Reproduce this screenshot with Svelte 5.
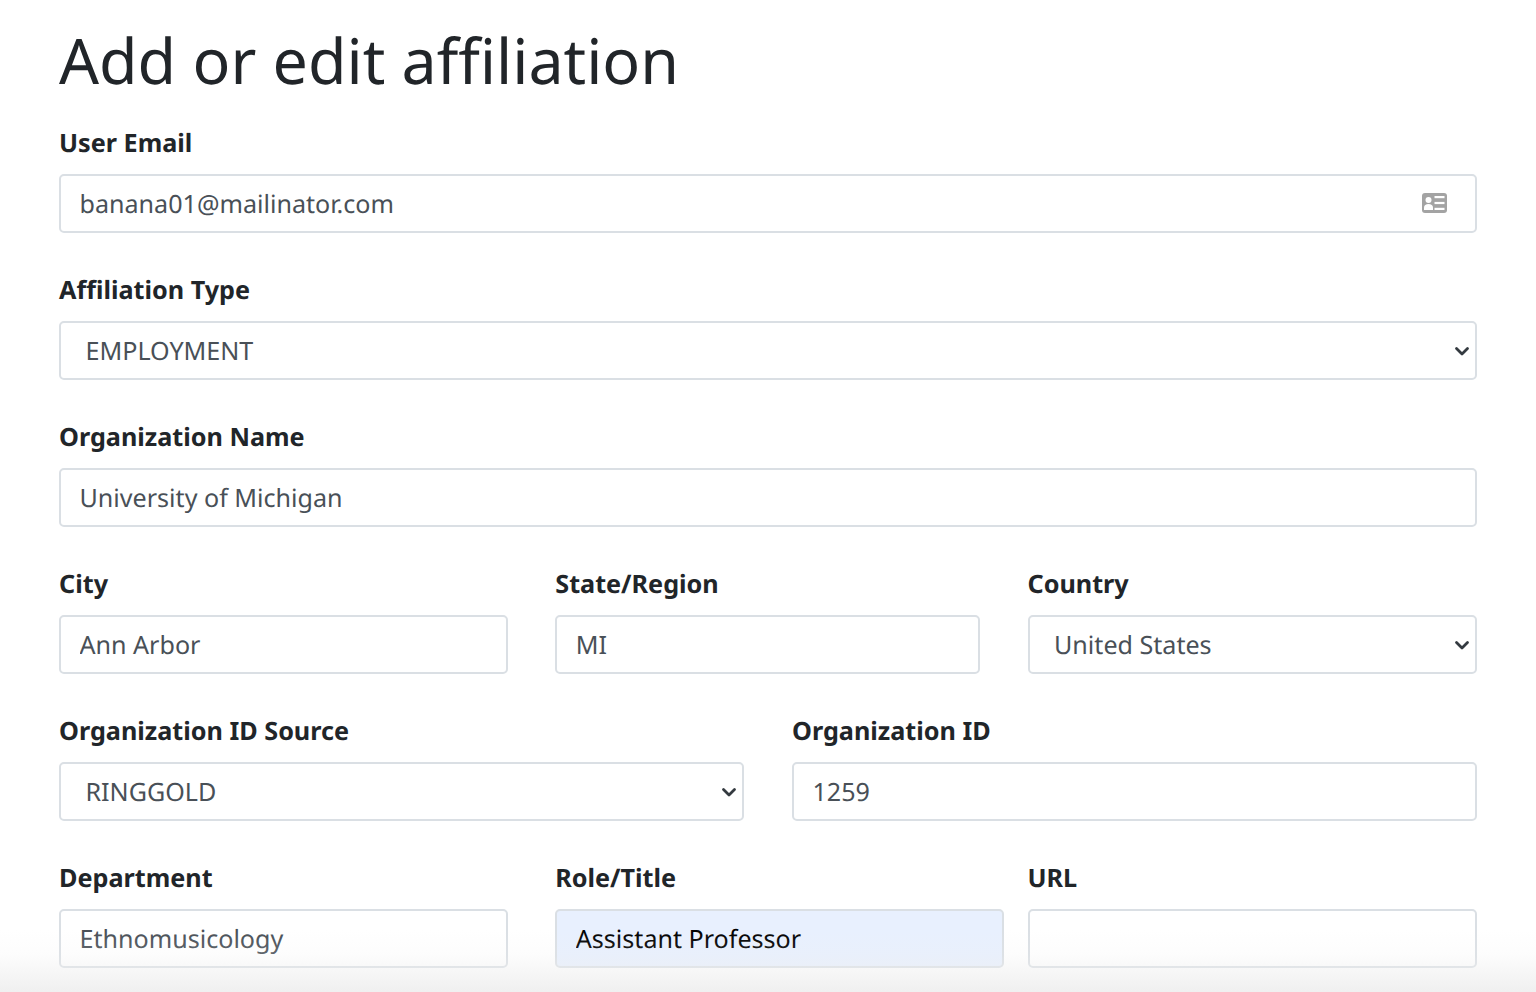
<script>
  let email = $state("banana01@mailinator.com");
  let affiliationType = $state("EMPLOYMENT");
  let orgName = $state("University of Michigan");
  let city = $state("Ann Arbor");
  let region = $state("MI");
  let country = $state("United States");
  let idSource = $state("RINGGOLD");
  let orgId = $state("1259");
  let department = $state("Ethnomusicology");
  let role = $state("Assistant Professor");
  let url = $state("");
</script>

{#snippet chevron()}
  <svg class="chevron" viewBox="0 0 16 16" aria-hidden="true">
    <path d="M2.5 5.5 8 11l5.5-5.5" fill="none" stroke="#343a40" stroke-width="2.800" stroke-linecap="round" stroke-linejoin="round" />
  </svg>
{/snippet}

<div class="page">
  <h1>Add or edit affiliation</h1>

  <form class="form">
    <div class="field">
      <label for="email">User Email</label>
      <div class="control">
        <input id="email" type="text" bind:value={email} />
        <svg class="contact" viewBox="0 0 25 20" aria-hidden="true">
          <rect width="25" height="20" rx="3" fill="#a3a3a3" />
          <circle cx="6.500" cy="7" r="3" fill="#fff" />
          <path d="M2 17v-2.400C2 12.300 3.800 11 6.500 11s4.500 1.300 4.500 3.600V17z" fill="#fff" />
          <rect x="12.500" y="3" width="10" height="2.200" fill="#fff" />
          <rect x="12.500" y="8.900" width="10" height="2.200" fill="#fff" />
          <rect x="12.500" y="14.800" width="10" height="2.200" fill="#fff" />
        </svg>
      </div>
    </div>

    <div class="field">
      <label for="type">Affiliation Type</label>
      <div class="control">
        <select id="type" bind:value={affiliationType}>
          <option>EMPLOYMENT</option>
          <option>EDUCATION</option>
        </select>
        {@render chevron()}
      </div>
    </div>

    <div class="field">
      <label for="org">Organization Name</label>
      <input id="org" type="text" bind:value={orgName} />
    </div>

    <div class="row thirds">
      <div class="field">
        <label for="city">City</label>
        <input id="city" type="text" bind:value={city} />
      </div>
      <div class="field">
        <label for="region">State/Region</label>
        <input id="region" type="text" bind:value={region} />
      </div>
      <div class="field">
        <label for="country">Country</label>
        <div class="control">
          <select id="country" bind:value={country}>
            <option>United States</option>
            <option>Canada</option>
          </select>
          {@render chevron()}
        </div>
      </div>
    </div>

    <div class="row halves">
      <div class="field">
        <label for="source">Organization ID Source</label>
        <div class="control">
          <select id="source" bind:value={idSource}>
            <option>RINGGOLD</option>
            <option>GRID</option>
          </select>
          {@render chevron()}
        </div>
      </div>
      <div class="field">
        <label for="orgid">Organization ID</label>
        <input id="orgid" type="text" bind:value={orgId} />
      </div>
    </div>

    <div class="row thirds">
      <div class="field">
        <label for="dept">Department</label>
        <input id="dept" type="text" bind:value={department} />
      </div>
      <div class="field wide">
        <label for="role">Role/Title</label>
        <input id="role" class="autofilled" type="text" bind:value={role} />
      </div>
      <div class="field">
        <label for="url">URL</label>
        <input id="url" type="text" bind:value={url} />
      </div>
    </div>
  </form>

  <div class="fade"></div>
</div>

<style>
  :global(body) {
    background: #fff;
    overflow: hidden;
  }

  .page {
    position: relative;
    height: 992px;
    box-sizing: border-box;
    padding: 0 59px;
    overflow: hidden;
    font-family: "Noto Sans", "Open Sans", sans-serif;
    color: #212529;
    text-rendering: geometricPrecision;
  }

  h1 {
    margin: 0;
    padding-top: 19px;
    font-size: 62.700px;
    font-weight: 400;
    line-height: 84px;
    height: 109px;
    box-sizing: content-box;
  }

  .form {
    display: flex;
    flex-direction: column;
    gap: 42px;
  }

  .row {
    display: grid;
  }

  .thirds {
    grid-template-columns: 449px 425px 449px;
    column-gap: 47.250px;
  }

  .halves {
    grid-template-columns: 1fr 1fr;
    column-gap: 48px;
  }

  .field {
    min-width: 0;
  }

  .wide {
    margin-right: -24px;
  }

  label {
    display: block;
    height: 46px;
    font-size: 25.200px;
    font-weight: 700;
    line-height: 30px;
    box-sizing: border-box;
  }

  .control {
    position: relative;
  }

  input,
  select {
    display: block;
    width: 100%;
    height: 59px;
    box-sizing: border-box;
    padding: 0 18.500px;
    border: 2px solid #dadfe4;
    border-radius: 5px;
    background: #fff;
    font-family: inherit;
    font-size: 25.100px;
    color: #495057;
    outline: none;
    text-rendering: geometricPrecision;
  }

  select {
    appearance: none;
    padding-left: 24.500px;
  }

  .autofilled {
    background: #e8f0fe;
    color: #000;
  }

  .contact {
    position: absolute;
    top: 19px;
    right: 30px;
    width: 25px;
    height: 20px;
  }

  .chevron {
    position: absolute;
    top: 22px;
    right: 7px;
    width: 16px;
    height: 16px;
    pointer-events: none;
  }

  .fade {
    position: absolute;
    left: 0;
    right: 0;
    bottom: 0;
    height: 62px;
    background: linear-gradient(
      to bottom,
      rgba(238, 238, 238, 0),
      rgba(238, 238, 238, 0.15) 40%,
      rgba(238, 238, 238, 0.5) 68%,
      rgba(238, 238, 238, 0.9)
    );
    pointer-events: none;
  }
</style>
